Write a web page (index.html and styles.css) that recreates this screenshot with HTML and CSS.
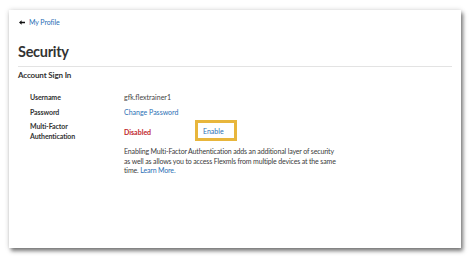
FILE: index.html
```html
<!DOCTYPE html>
<html>
<head>
<meta charset="utf-8">
<link rel="stylesheet" href="styles.css">
</head>
<body>
<div class="card">
  <a class="back" href="#"><svg class="arrow" width="6" height="5" viewBox="0 0 6 5"><path d="M0 2.5 L2.6 0.2 L2.6 1.8 L6 1.8 L6 3.2 L2.6 3.2 L2.6 4.8 Z" fill="#111"/></svg><span class="back-text">My Profile</span></a>
  <h1 class="title">Security</h1>
  <h2 class="section">Account Sign In</h2>
  <div class="rows">
    <div class="label">Username</div>
    <div class="value">gfk.flextrainer1</div>
    <div class="label">Password</div>
    <div class="value"><a class="link" href="#">Change Password</a></div>
    <div class="label mfa-label">Multi-Factor<br>Authentication</div>
    <div class="value mfa">
      <div class="mfa-top">
        <span class="disabled">Disabled</span>
        <span class="enable-box"><a class="link" href="#">Enable</a></span>
      </div>
      <p class="desc">Enabling Multi-Factor Authentication adds an additional layer of security<br>as well as allows you to access Flexmls from multiple devices at the same<br>time. <a class="link" href="#">Learn More.</a></p>
    </div>
  </div>
</div>
</body>
</html>
```
FILE: styles.css
```css
html, body {
  margin: 0;
  padding: 0;
  background: #ffffff;
}
body {
  font-family: "Lato", "Liberation Sans", sans-serif;
  color: #333333;
  padding-bottom: 8px;
}
.card {
  margin: 10px 0 0 9px;
  width: 452px;
  height: 238px;
  box-sizing: border-box;
  background: #ffffff;
  box-shadow: 2px 3px 4px rgba(0,0,0,0.5), 0 0 5px rgba(0,0,0,0.15);
  padding: 4px 9px 0 9px;
}
.back {
  display: flex;
  align-items: center;
  gap: 4px;
  text-decoration: none;
  height: 16px;
}
.arrow {
  display: block;
  margin-left: 1px;
}
.back-text {
  font-size: 7px;
  color: #2a6fb5;
  letter-spacing: -0.1px;
}
.title {
  margin: 12px 0 0 0;
  font-size: 14.5px;
  font-weight: 700;
  letter-spacing: -0.3px;
  color: #333;
  line-height: 20px;
  padding-bottom: 4px;
  border-bottom: 1px solid #e3e3e3;
}
.section {
  margin: 3px 0 0 0;
  font-size: 8px;
  font-weight: 700;
  letter-spacing: -0.15px;
  color: #333;
  line-height: 10px;
}
.rows {
  display: grid;
  grid-template-columns: 94px 1fr;
  margin: 12px 0 0 12px;
  row-gap: 5px;
  font-size: 7px;
  line-height: 10px;
}
.label {
  font-weight: 700;
  color: #333;
  letter-spacing: -0.1px;
}
.mfa-label {
  margin-top: -1px;
}
.value {
  color: #444;
}
.link {
  color: #2a6fb5;
  text-decoration: none;
}
.mfa-top {
  display: flex;
  align-items: center;
  margin-top: -2px;
}
.disabled {
  color: #c0282d;
  font-weight: 700;
  width: 71px;
  padding-top: 3px;
}
.enable-box {
  display: inline-flex;
  align-items: center;
  width: 42px;
  height: 21px;
  box-sizing: border-box;
  border: 3px solid #e8b63c;
  padding-left: 5px;
}
.desc {
  margin: 6px 0 0 0;
  width: 240px;
  line-height: 9.7px;
  letter-spacing: -0.15px;
  color: #3a3a3a;
  white-space: nowrap;
}
```
